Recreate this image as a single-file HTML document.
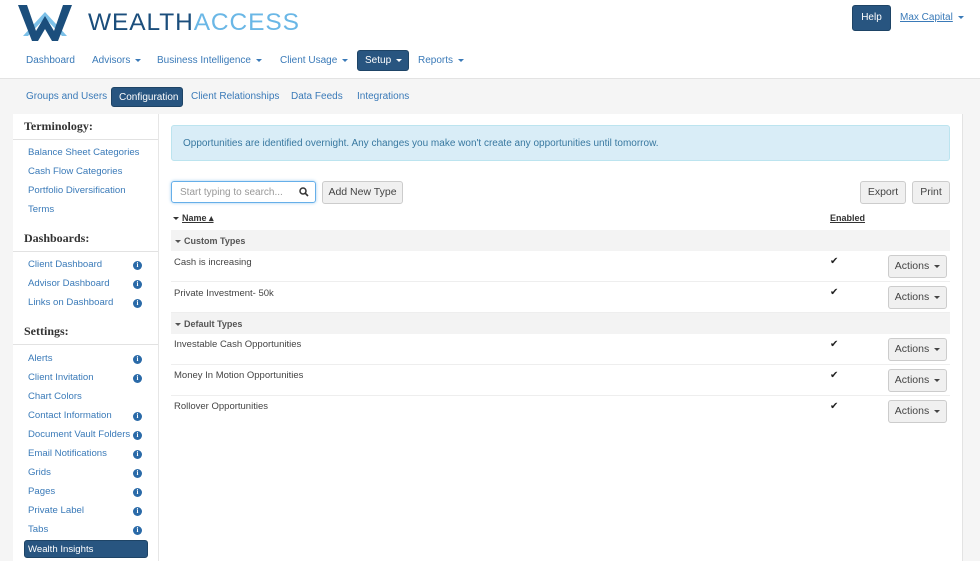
<!DOCTYPE html>
<html><head><meta charset="utf-8"><style>
*{box-sizing:border-box;margin:0;padding:0}
body{width:980px;height:561px;overflow:hidden;font-family:"Liberation Sans",sans-serif;background:#fff;position:relative;font-size:11px;color:#333}
.a{position:absolute}
.nav a{position:absolute;top:55px;color:#3a7ab8;font-size:10px;white-space:nowrap}
.car{display:inline-block;width:0;height:0;border-left:3px solid transparent;border-right:3px solid transparent;border-top:3px solid currentColor;vertical-align:middle;margin-left:5px}
.sub a{position:absolute;top:91px;color:#3a7ab8;font-size:10px;white-space:nowrap}
.btnN{position:absolute;background:#285580;color:#fff;border-radius:3px;border:1px solid #1e4466}
.sh{position:absolute;left:24px;font-family:"Liberation Serif",serif;font-weight:bold;font-size:12px;color:#333}
.hr{position:absolute;left:13px;width:145px;height:1px;background:#e2e2e2}
.si{position:absolute;left:28px;color:#3a7ab8;font-size:9.6px;white-space:nowrap}
.info{position:absolute;left:133px;width:9px;height:9px;border-radius:50%;background:#2a6aa8;color:#fff;font-size:7px;font-weight:bold;text-align:center;line-height:9px;font-family:"Liberation Serif",serif}
.btn{position:absolute;background:#f0f0f0;border:1px solid #ccc;border-radius:3px;color:#444;font-size:10.5px;text-align:center}
.row{position:absolute;left:171px;width:779px;border-bottom:1px solid #eee;font-size:9.5px;color:#444}
.grp{position:absolute;left:171px;width:779px;height:21px;background:#f3f3f3;font-size:9px;font-weight:bold;color:#555;padding:6px 0 0 4px}
.act{position:absolute;left:717px;top:4px;width:59px;height:23px;background:#f0f0f0;border:1px solid #ccc;border-radius:3px;font-size:10.5px;color:#444;text-align:center;line-height:21px}
.chk{position:absolute;left:659px;top:5px;font-size:10px;color:#222}
</style></head><body>
<svg class="a" style="left:17px;top:4px" width="56" height="38" viewBox="0 0 56 38">
<polygon points="6,32 28,8 50,32 45,32 28,14 11,32" fill="#7cc0e8"/>
<polygon points="1,1 10,1 19,27 28,12 37,27 46,1 55,1 41,37 35,37 28,25 21,37 15,37" fill="#1b4e7c"/>
</svg>
<div class="a" style="left:88px;top:9px;font-size:24.5px;letter-spacing:0.9px;color:#1b4e7c;white-space:nowrap">WEALTH<span style="color:#6ab7e6">ACCESS</span></div>
<div class="btnN" style="left:852px;top:5px;width:39px;height:26px;text-align:center;line-height:24px;font-size:10px">Help</div>
<div class="a" style="left:900px;top:12px;color:#3a7ab8;text-decoration:underline;font-size:10px">Max Capital<span class="car"></span></div>
<div class="nav">
<a style="left:26px">Dashboard</a>
<a style="left:92px">Advisors<span class="car"></span></a>
<a style="left:157px">Business Intelligence<span class="car"></span></a>
<a style="left:280px">Client Usage<span class="car"></span></a>
<a style="left:418px">Reports<span class="car"></span></a>
</div>
<div class="btnN" style="left:357px;top:50px;width:52px;height:21px;font-size:10px;padding:4px 0 0 7px">Setup<span class="car"></span></div>
<div class="a" style="left:0;top:78px;width:980px;height:36px;background:#f5f5f5;border-top:1px solid #e3e3e3"></div>
<div class="sub">
<a style="left:26px">Groups and Users</a>
<a style="left:191px">Client Relationships</a>
<a style="left:291px">Data Feeds</a>
<a style="left:357px">Integrations</a>
</div>
<div class="btnN" style="left:111px;top:87px;width:72px;height:20px;font-size:10px;padding:4px 0 0 7px">Configuration</div>
<div class="a" style="left:0;top:114px;width:13px;height:447px;background:#f5f5f5"></div>
<div class="a" style="left:158px;top:114px;width:1px;height:447px;background:#e6e6e6"></div>
<div class="a" style="left:962px;top:114px;width:18px;height:447px;background:#f5f5f5;border-left:1px solid #e3e3e3"></div>
<div class="sh" style="top:119px">Terminology:</div><div class="hr" style="top:139px"></div>
<div class="si" style="top:147px">Balance Sheet Categories</div>
<div class="si" style="top:166px">Cash Flow Categories</div>
<div class="si" style="top:185px">Portfolio Diversification</div>
<div class="si" style="top:204px">Terms</div>
<div class="sh" style="top:231px">Dashboards:</div><div class="hr" style="top:251px"></div>
<div class="si" style="top:259px">Client Dashboard</div><div class="info" style="top:261px">i</div>
<div class="si" style="top:278px">Advisor Dashboard</div><div class="info" style="top:280px">i</div>
<div class="si" style="top:297px">Links on Dashboard</div><div class="info" style="top:299px">i</div>
<div class="sh" style="top:324px">Settings:</div><div class="hr" style="top:344px"></div>
<div class="si" style="top:353px">Alerts</div><div class="info" style="top:355px">i</div>
<div class="si" style="top:372px">Client Invitation</div><div class="info" style="top:374px">i</div>
<div class="si" style="top:391px">Chart Colors</div>
<div class="si" style="top:410px">Contact Information</div><div class="info" style="top:412px">i</div>
<div class="si" style="top:429px">Document Vault Folders</div><div class="info" style="top:431px">i</div>
<div class="si" style="top:448px">Email Notifications</div><div class="info" style="top:450px">i</div>
<div class="si" style="top:467px">Grids</div><div class="info" style="top:469px">i</div>
<div class="si" style="top:486px">Pages</div><div class="info" style="top:488px">i</div>
<div class="si" style="top:505px">Private Label</div><div class="info" style="top:507px">i</div>
<div class="si" style="top:524px">Tabs</div><div class="info" style="top:526px">i</div>
<div class="btnN" style="left:24px;top:540px;width:124px;height:18px;font-size:9.6px;padding:3px 0 0 3px">Wealth Insights</div>
<div class="a" style="left:171px;top:125px;width:779px;height:36px;background:#d9edf7;border:1px solid #bce4ef;border-radius:3px;color:#3878a0;font-size:10px;padding:12px 0 0 11px">Opportunities are identified overnight. Any changes you make won't create any opportunities until tomorrow.</div>
<div class="a" style="left:171px;top:181px;width:145px;height:22px;border:1px solid #66afe9;border-radius:3px;box-shadow:0 0 3px #9fcbee;color:#999;font-size:10px;padding:5px 0 0 8px">Start typing to search...
<svg class="a" style="left:127px;top:5px" width="10" height="10" viewBox="0 0 10 10"><circle cx="4" cy="4" r="3" fill="none" stroke="#333" stroke-width="1.5"/><line x1="6.2" y1="6.2" x2="9" y2="9" stroke="#333" stroke-width="1.6"/></svg></div>
<div class="btn" style="left:322px;top:181px;width:81px;height:23px;line-height:21px">Add New Type</div>
<div class="btn" style="left:860px;top:181px;width:46px;height:23px;line-height:21px">Export</div>
<div class="btn" style="left:912px;top:181px;width:38px;height:23px;line-height:21px">Print</div>
<div class="a" style="left:173px;top:213px;font-size:9px;font-weight:bold;color:#333;text-decoration:underline"><span class="car" style="margin:0 3px 0 0"></span>Name ▴</div>
<div class="a" style="left:830px;top:213px;font-size:9px;font-weight:bold;color:#333;text-decoration:underline">Enabled</div>
<div class="grp" style="top:230px"><span class="car" style="margin:0 3px 0 0"></span>Custom Types</div>
<div class="row" style="top:251px;height:31px;padding:6px 0 0 3px">Cash is increasing<span class="chk">✔</span><div class="act">Actions<span class="car"></span></div></div>
<div class="row" style="top:282px;height:31px;padding:6px 0 0 3px">Private Investment- 50k<span class="chk">✔</span><div class="act">Actions<span class="car"></span></div></div>
<div class="grp" style="top:313px"><span class="car" style="margin:0 3px 0 0"></span>Default Types</div>
<div class="row" style="top:334px;height:31px;padding:5px 0 0 3px">Investable Cash Opportunities<span class="chk">✔</span><div class="act">Actions<span class="car"></span></div></div>
<div class="row" style="top:365px;height:31px;padding:5px 0 0 3px">Money In Motion Opportunities<span class="chk">✔</span><div class="act">Actions<span class="car"></span></div></div>
<div class="row" style="top:396px;height:31px;padding:5px 0 0 3px;border:none">Rollover Opportunities<span class="chk">✔</span><div class="act">Actions<span class="car"></span></div></div>
</body></html>
